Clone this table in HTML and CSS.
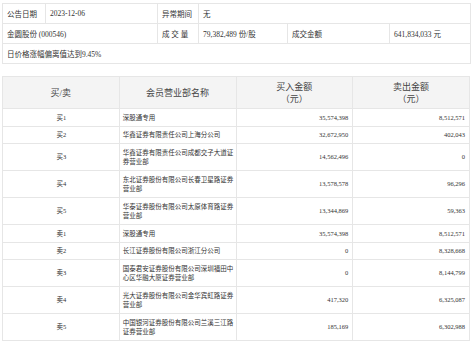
FILE: index.html
```html
<!DOCTYPE html>
<html lang="zh">
<head>
  <meta charset="UTF-8">
  <title>龙虎榜</title>
  <link rel="stylesheet" href="styles.css">
</head>
<body>
  <div class="page">
    <!-- 基本信息 -->
    <table class="info">
      <colgroup>
        <col class="c1"><col class="c2"><col class="c3"><col class="c4"><col class="c5"><col class="c6">
      </colgroup>
      <tr>
        <td>公告日期</td>
        <td>2023-12-06</td>
        <td>异常期间</td>
        <td colspan="3">无</td>
      </tr>
      <tr>
        <td colspan="2">金圆股份 (000546)</td>
        <td>成 交 量</td>
        <td>79,382,489 份/股</td>
        <td>成交金额</td>
        <td>641,834,033 元</td>
      </tr>
      <tr>
        <td colspan="6">日价格涨幅偏离值达到9.45%</td>
      </tr>
    </table>

    <!-- 买卖明细 -->
    <table class="detail">
      <thead>
        <tr>
          <th>买/卖</th>
          <th>会员营业部名称</th>
          <th>买入金额<br>（元）</th>
          <th>卖出金额<br>（元）</th>
        </tr>
      </thead>
      <tbody>
        <tr><td class="side">买1</td><td class="name">深股通专用</td><td class="num">35,574,398</td><td class="num">8,512,571</td></tr>
        <tr><td class="side">买2</td><td class="name">华鑫证券有限责任公司上海分公司</td><td class="num">32,672,950</td><td class="num">402,043</td></tr>
        <tr><td class="side">买3</td><td class="name">华鑫证券有限责任公司成都交子大道证券营业部</td><td class="num">14,562,496</td><td class="num">0</td></tr>
        <tr><td class="side">买4</td><td class="name">东北证券股份有限公司长春卫星路证券营业部</td><td class="num">13,578,578</td><td class="num">96,296</td></tr>
        <tr><td class="side">买5</td><td class="name">华泰证券股份有限公司太原体育路证券营业部</td><td class="num">13,344,869</td><td class="num">59,363</td></tr>
        <tr><td class="side">卖1</td><td class="name">深股通专用</td><td class="num">35,574,398</td><td class="num">8,512,571</td></tr>
        <tr><td class="side">卖2</td><td class="name">长江证券股份有限公司浙江分公司</td><td class="num">0</td><td class="num">8,328,668</td></tr>
        <tr><td class="side">卖3</td><td class="name">国泰君安证券股份有限公司深圳福田中心区华融大厦证券营业部</td><td class="num">0</td><td class="num">8,144,799</td></tr>
        <tr><td class="side">卖4</td><td class="name">光大证券股份有限公司金华宾虹路证券营业部</td><td class="num">417,320</td><td class="num">6,325,087</td></tr>
        <tr><td class="side">卖5</td><td class="name">中国银河证券股份有限公司兰溪三江路证券营业部</td><td class="num">185,169</td><td class="num">6,302,988</td></tr>
      </tbody>
    </table>
  </div>
</body>
</html>
```

FILE: styles.css
```css
body {
  margin: 0;
  background: #fff;
  font-family: "Liberation Serif", "Noto Sans CJK SC", serif;
  color: #444;
}

.page {
  padding: 3px 4px 0 2px;
}

table {
  width: 468px;
  border-collapse: collapse;
  table-layout: fixed;
}

td, th {
  border: 1px solid #e6e6e6;
}

/* 基本信息表 */
.info td {
  height: 19px;
  padding: 0 4px;
  font-size: 7.5px;
  color: #333;
  white-space: nowrap;
}

.info .c1 { width: 43px; }
.info .c2 { width: 112px; }
.info .c3 { width: 41px; }
.info .c4 { width: 89px; }
.info .c5 { width: 102px; }
.info .c6 { width: 81px; }

/* 买卖明细表 */
.detail {
  margin-top: 12px;
}

.detail th {
  height: 31px;
  padding: 0;
  background: #f4f4f4;
  font-size: 9px;
  line-height: 12px;
  font-weight: normal;
  color: #444;
}

.detail td {
  padding: 3.5px 2px 3.5px 3px;
  font-size: 6.5px;
  line-height: 9.5px;
  color: #333;
}

.detail .side {
  text-align: center;
}

.detail .num {
  text-align: right;
  padding-right: 4px;
}
```
